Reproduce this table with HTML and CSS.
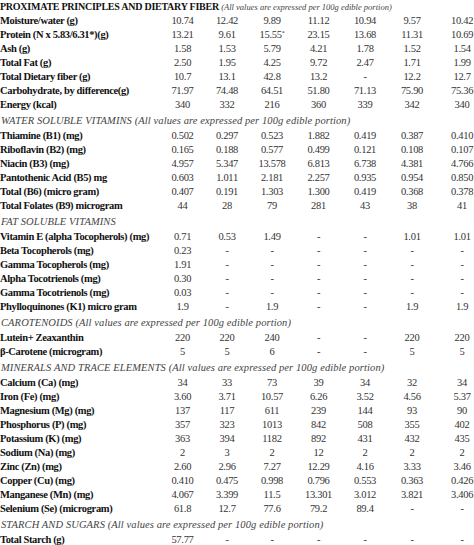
FILE: index.html
```html
<!DOCTYPE html>
<html lang="en">
<head>
<meta charset="utf-8">
<title>Nutrient composition</title>
<link rel="stylesheet" href="styles.css">
</head>
<body>
<table class="nutr">
<colgroup>
<col class="c-label"><col class="c1"><col class="c2"><col class="c3"><col class="c4"><col class="c5"><col class="c6"><col class="c7">
</colgroup>
<tbody>
<tr class="title"><td colspan="8"><b class="ttl">PROXIMATE PRINCIPLES AND DIETARY FIBER</b> <i class="note">(All values are expressed per 100g edible portion)</i></td></tr>
<tr><th>Moisture/water (g)</th><td>10.74</td><td>12.42</td><td>9.89</td><td>11.12</td><td>10.94</td><td>9.57</td><td>10.42</td></tr>
<tr><th>Protein (N x 5.83/6.31*)(g)</th><td>13.21</td><td>9.61</td><td>15.55<sup>*</sup></td><td>23.15</td><td>13.68</td><td>11.31</td><td>10.69</td></tr>
<tr><th>Ash (g)</th><td>1.58</td><td>1.53</td><td>5.79</td><td>4.21</td><td>1.78</td><td>1.52</td><td>1.54</td></tr>
<tr><th>Total Fat (g)</th><td>2.50</td><td>1.95</td><td>4.25</td><td>9.72</td><td>2.47</td><td>1.71</td><td>1.99</td></tr>
<tr class="left"><th>Total Dietary fiber (g)</th><td>10.7</td><td>13.1</td><td>42.8</td><td>13.2</td><td class="dash">-</td><td>12.2</td><td>12.7</td></tr>
<tr><th>Carbohydrate, by difference(g)</th><td>71.97</td><td>74.48</td><td>64.51</td><td>51.80</td><td>71.13</td><td>75.90</td><td>75.36</td></tr>
<tr><th>Energy (kcal)</th><td>340</td><td>332</td><td>216</td><td>360</td><td>339</td><td>342</td><td>340</td></tr>
<tr class="sect"><td colspan="8">WATER SOLUBLE VITAMINS (All values are expressed per 100g edible portion)</td></tr>
<tr><th>Thiamine (B1) (mg)</th><td>0.502</td><td>0.297</td><td>0.523</td><td>1.882</td><td>0.419</td><td>0.387</td><td>0.410</td></tr>
<tr><th>Riboflavin (B2) (mg)</th><td>0.165</td><td>0.188</td><td>0.577</td><td>0.499</td><td>0.121</td><td>0.108</td><td>0.107</td></tr>
<tr><th>Niacin (B3) (mg)</th><td>4.957</td><td>5.347</td><td>13.578</td><td>6.813</td><td>6.738</td><td>4.381</td><td>4.766</td></tr>
<tr><th>Pantothenic Acid (B5) mg</th><td>0.603</td><td>1.011</td><td>2.181</td><td>2.257</td><td>0.935</td><td>0.954</td><td>0.850</td></tr>
<tr><th>Total (B6) (micro gram)</th><td>0.407</td><td>0.191</td><td>1.303</td><td>1.300</td><td>0.419</td><td>0.368</td><td>0.378</td></tr>
<tr><th>Total Folates (B9) microgram</th><td>44</td><td>28</td><td>79</td><td>281</td><td>43</td><td>38</td><td>41</td></tr>
<tr class="sect"><td colspan="8">FAT SOLUBLE VITAMINS</td></tr>
<tr><th>Vitamin E (alpha Tocopherols) (mg)</th><td>0.71</td><td>0.53</td><td>1.49</td><td>-</td><td>-</td><td>1.01</td><td>1.01</td></tr>
<tr><th>Beta Tocopherols (mg)</th><td>0.23</td><td>-</td><td>-</td><td>-</td><td>-</td><td>-</td><td>-</td></tr>
<tr><th>Gamma Tocopherols (mg)</th><td>1.91</td><td>-</td><td>-</td><td>-</td><td>-</td><td>-</td><td>-</td></tr>
<tr><th>Alpha Tocotrienols (mg)</th><td>0.30</td><td>-</td><td>-</td><td>-</td><td>-</td><td>-</td><td>-</td></tr>
<tr><th>Gamma Tocotrienols (mg)</th><td>0.03</td><td>-</td><td>-</td><td>-</td><td>-</td><td>-</td><td>-</td></tr>
<tr><th>Phylloquinones (K1) micro gram</th><td>1.9</td><td>-</td><td>1.9</td><td>-</td><td>-</td><td>1.9</td><td>1.9</td></tr>
<tr class="sect"><td colspan="8">CAROTENOIDS (All values are expressed per 100g edible portion)</td></tr>
<tr><th>Lutein+ Zeaxanthin</th><td>220</td><td>220</td><td>240</td><td>-</td><td>-</td><td>220</td><td>220</td></tr>
<tr><th>β-Carotene (microgram)</th><td>5</td><td>5</td><td>6</td><td>-</td><td>-</td><td>5</td><td>5</td></tr>
<tr class="sect"><td colspan="8">MINERALS AND TRACE ELEMENTS (All values are expressed per 100g edible portion)</td></tr>
<tr><th>Calcium (Ca) (mg)</th><td>34</td><td>33</td><td>73</td><td>39</td><td>34</td><td>32</td><td>34</td></tr>
<tr><th>Iron (Fe) (mg)</th><td>3.60</td><td>3.71</td><td>10.57</td><td>6.26</td><td>3.52</td><td>4.56</td><td>5.37</td></tr>
<tr><th>Magnesium (Mg) (mg)</th><td>137</td><td>117</td><td>611</td><td>239</td><td>144</td><td>93</td><td>90</td></tr>
<tr><th>Phosphorus (P) (mg)</th><td>357</td><td>323</td><td>1013</td><td>842</td><td>508</td><td>355</td><td>402</td></tr>
<tr><th>Potassium (K) (mg)</th><td>363</td><td>394</td><td>1182</td><td>892</td><td>431</td><td>432</td><td>435</td></tr>
<tr><th>Sodium (Na) (mg)</th><td>2</td><td>3</td><td>2</td><td>12</td><td>2</td><td>2</td><td>2</td></tr>
<tr><th>Zinc (Zn) (mg)</th><td>2.60</td><td>2.96</td><td>7.27</td><td>12.29</td><td>4.16</td><td>3.33</td><td>3.46</td></tr>
<tr><th>Copper (Cu) (mg)</th><td>0.410</td><td>0.475</td><td>0.998</td><td>0.796</td><td>0.553</td><td>0.363</td><td>0.426</td></tr>
<tr><th>Manganese (Mn) (mg)</th><td>4.067</td><td>3.399</td><td>11.5</td><td>13.301</td><td>3.012</td><td>3.821</td><td>3.406</td></tr>
<tr><th>Selenium (Se) (microgram)</th><td>61.8</td><td>12.7</td><td>77.6</td><td>79.2</td><td>89.4</td><td>-</td><td>-</td></tr>
<tr class="sect"><td colspan="8">STARCH AND SUGARS (All values are expressed per 100g edible portion)</td></tr>
<tr><th>Total Starch (g)</th><td>57.77</td><td>-</td><td>-</td><td>-</td><td>-</td><td>-</td><td>-</td></tr>
</tbody>
</table>
</body>
</html>
```
FILE: styles.css
```css
html, body {
  margin: 0;
  padding: 0;
  background: #ffffff;
  overflow: hidden;
}
body {
  width: 474px;
  height: 545px;
  font-family: "Liberation Serif", "Times New Roman", serif;
  color: #1a1a1a;
}
.nutr {
  border-collapse: collapse;
  table-layout: fixed;
  width: 488px;
}
.c-label { width: 160px; }
.c1 { width: 45px; }
.c2 { width: 44px; }
.c3 { width: 46px; }
.c4 { width: 47px; }
.c5 { width: 46px; }
.c6 { width: 48px; }
.c7 { width: 52px; }

.nutr th,
.nutr td {
  padding: 0;
  height: 14px;
  line-height: 14px;
  white-space: nowrap;
  vertical-align: middle;
}
.nutr th {
  text-align: left;
  font-weight: bold;
  font-size: 10.5px;
  letter-spacing: -0.35px;
  color: #111111;
}
.nutr td {
  text-align: center;
  font-size: 10.5px;
  letter-spacing: -0.3px;
  color: #333333;
}
.nutr td sup {
  font-size: 6px;
  line-height: 0;
  vertical-align: 3px;
}
.title td {
  height: 13px;
  line-height: 13px;
  text-align: left;
}
.ttl {
  font-size: 10px;
  letter-spacing: -0.25px;
  color: #111111;
}
.note {
  font-size: 8.5px;
  letter-spacing: 0;
  color: #444444;
}
.sect td {
  height: 17px;
  line-height: 17px;
  text-align: left;
  font-style: italic;
  font-size: 10.5px;
  letter-spacing: 0.1px;
  color: #444444;
  padding-left: 1px;
}
```
